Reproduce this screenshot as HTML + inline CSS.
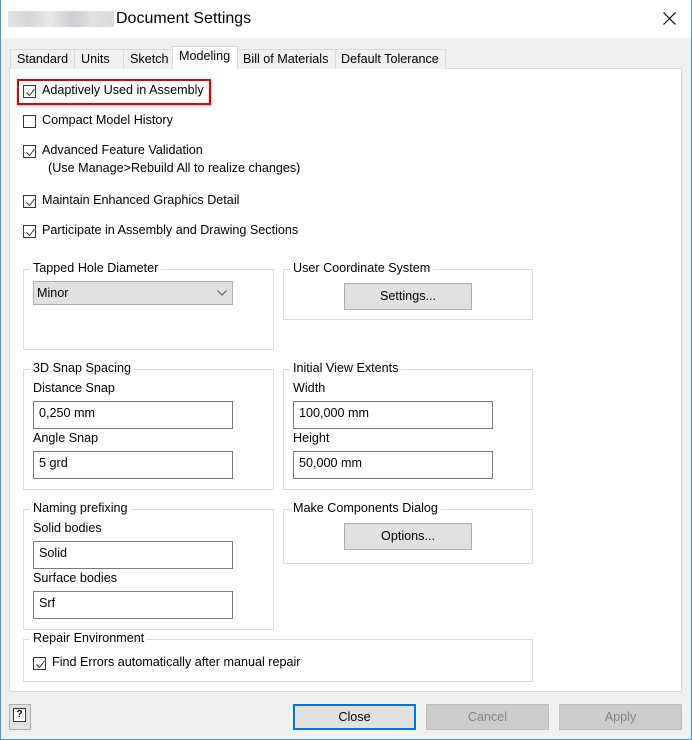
<!DOCTYPE html>
<html><head><meta charset="utf-8"><style>
*{box-sizing:border-box;margin:0;padding:0}
body{width:692px;height:740px;overflow:hidden;background:#f0f0f0;font-family:"Liberation Sans",sans-serif;font-size:12.6px;color:#000;position:relative}
.a{position:absolute;white-space:nowrap}
.frame{position:absolute;left:0;top:0;width:692px;height:740px;border:1px solid #3c9ce0;border-top:none;pointer-events:none}
.title{position:absolute;left:0;top:0;width:692px;height:38px;background:#fff}
.tab{position:absolute;top:49px;height:20px;background:#f0f0f0;border:1px solid #d9d9d9;border-bottom:none;padding:2px 0 0 6px}
.panel{position:absolute;left:9px;top:68px;width:673px;height:624px;background:#fff;border:1px solid #d9d9d9}
.cb{position:absolute;width:13px;height:13px;border:1px solid #333;background:#fff}
.cb svg{position:absolute;left:1px;top:1px}
.grp{position:absolute;border:1px solid #dcdcdc}
.grp .lg{position:absolute;top:-9px;left:6px;background:#fff;padding:0 3px;line-height:15px}
.inp{position:absolute;height:28px;border:1px solid #7a7a7a;background:#fff;padding:4px 0 0 5px}
.btn{position:absolute;border:1px solid #adadad;background:#e1e1e1;text-align:center;line-height:24px}
</style></head><body>
<div class="title"></div>
<div class="a" style="left:8px;top:11px;width:106px;height:16px;background:linear-gradient(90deg,#d8d8d8,#c4c4c8,#e0e0e0,#b8b8c0,#d4d4d4,#c8ccc8);opacity:.7"></div>
<div class="a" style="left:116px;top:10px;font-size:16px">Document Settings</div>
<svg class="a" style="left:663px;top:12px" width="13" height="13"><path d="M0.5 0.5L12.5 12.5M12.5 0.5L0.5 12.5" stroke="#000" stroke-width="1.2"/></svg>

<div class="panel"></div>
<div class="tab" style="left:10px;width:65px">Standard</div>
<div class="tab" style="left:74px;width:50px">Units</div>
<div class="tab" style="left:123px;width:50px;padding-left:6px">Sketch</div>
<div class="tab" style="left:172px;top:46px;height:23px;width:66px;background:#fff;border-color:#d9d9d9">Modeling</div>
<div class="tab" style="left:237px;width:99px;padding-left:5px">Bill of Materials</div>
<div class="tab" style="left:335px;width:111px;padding-left:5px">Default Tolerance</div>

<div class="a" style="left:17px;top:79px;width:194px;height:26px;border:2px solid #e00000;box-shadow:1px 1px 2px rgba(0,0,0,.3)"></div>
<div class="cb" style="left:23px;top:85px"><svg width="11" height="11"><path d="M1.5 5.5L4.5 8.5L9.5 2" stroke="#333" fill="none"/></svg></div>
<div class="a" style="left:42px;top:83px">Adaptively Used in Assembly</div>
<div class="cb" style="left:23px;top:115px"></div>
<div class="a" style="left:42px;top:113px">Compact Model History</div>
<div class="cb" style="left:23px;top:145px"><svg width="11" height="11"><path d="M1.5 5.5L4.5 8.5L9.5 2" stroke="#333" fill="none"/></svg></div>
<div class="a" style="left:42px;top:143px">Advanced Feature Validation</div>
<div class="a" style="left:48px;top:161px">(Use Manage&gt;Rebuild All to realize changes)</div>
<div class="cb" style="left:23px;top:195px"><svg width="11" height="11"><path d="M1.5 5.5L4.5 8.5L9.5 2" stroke="#333" fill="none"/></svg></div>
<div class="a" style="left:42px;top:193px">Maintain Enhanced Graphics Detail</div>
<div class="cb" style="left:23px;top:225px"><svg width="11" height="11"><path d="M1.5 5.5L4.5 8.5L9.5 2" stroke="#333" fill="none"/></svg></div>
<div class="a" style="left:42px;top:223px">Participate in Assembly and Drawing Sections</div>

<div class="grp" style="left:23px;top:269px;width:251px;height:81px"><span class="lg">Tapped Hole Diameter</span></div>
<div class="a" style="left:33px;top:281px;width:200px;height:24px;background:#e1e1e1;border:1px solid #adadad;padding:4px 0 0 3px">Minor</div>
<svg class="a" style="left:217px;top:290px" width="10" height="6"><path d="M0.5 0.5L5 5L9.5 0.5" stroke="#555" fill="none"/></svg>

<div class="grp" style="left:283px;top:269px;width:250px;height:51px"><span class="lg">User Coordinate System</span></div>
<div class="btn" style="left:344px;top:283px;width:128px;height:27px">Settings...</div>

<div class="grp" style="left:23px;top:369px;width:251px;height:121px"><span class="lg">3D Snap Spacing</span></div>
<div class="a" style="left:33px;top:381px">Distance Snap</div>
<div class="inp" style="left:33px;top:401px;width:200px">0,250 mm</div>
<div class="a" style="left:33px;top:431px">Angle Snap</div>
<div class="inp" style="left:33px;top:451px;width:200px">5 grd</div>

<div class="grp" style="left:283px;top:369px;width:250px;height:121px"><span class="lg">Initial View Extents</span></div>
<div class="a" style="left:293px;top:381px">Width</div>
<div class="inp" style="left:293px;top:401px;width:200px">100,000 mm</div>
<div class="a" style="left:293px;top:431px">Height</div>
<div class="inp" style="left:293px;top:451px;width:200px">50,000 mm</div>

<div class="grp" style="left:23px;top:509px;width:251px;height:121px"><span class="lg">Naming prefixing</span></div>
<div class="a" style="left:33px;top:521px">Solid bodies</div>
<div class="inp" style="left:33px;top:541px;width:200px">Solid</div>
<div class="a" style="left:33px;top:571px">Surface bodies</div>
<div class="inp" style="left:33px;top:591px;width:200px">Srf</div>

<div class="grp" style="left:283px;top:509px;width:250px;height:55px"><span class="lg">Make Components Dialog</span></div>
<div class="btn" style="left:344px;top:523px;width:128px;height:27px">Options...</div>

<div class="grp" style="left:23px;top:639px;width:510px;height:43px"><span class="lg">Repair Environment</span></div>
<div class="cb" style="left:33px;top:657px"><svg width="11" height="11"><path d="M1.5 5.5L4.5 8.5L9.5 2" stroke="#333" fill="none"/></svg></div>
<div class="a" style="left:52px;top:655px">Find Errors automatically after manual repair</div>

<div class="a" style="left:9px;top:704px;width:22px;height:26px;border:1px solid #adadad;background:#e1e1e1"></div>
<div class="a" style="left:13px;top:708px;width:13px;height:14px;border:1px solid #333;background:#fff;font-size:10px;font-weight:bold;text-align:center;line-height:12px">?</div>
<div class="btn" style="left:293px;top:704px;width:123px;height:26px;border:2px solid #0078d7;line-height:22px">Close</div>
<div class="btn" style="left:426px;top:704px;width:123px;height:26px;background:#ccc;border-color:#bfbfbf;color:#838383">Cancel</div>
<div class="btn" style="left:559px;top:704px;width:123px;height:26px;background:#ccc;border-color:#bfbfbf;color:#838383">Apply</div>
<div class="frame"></div>
</body></html>
